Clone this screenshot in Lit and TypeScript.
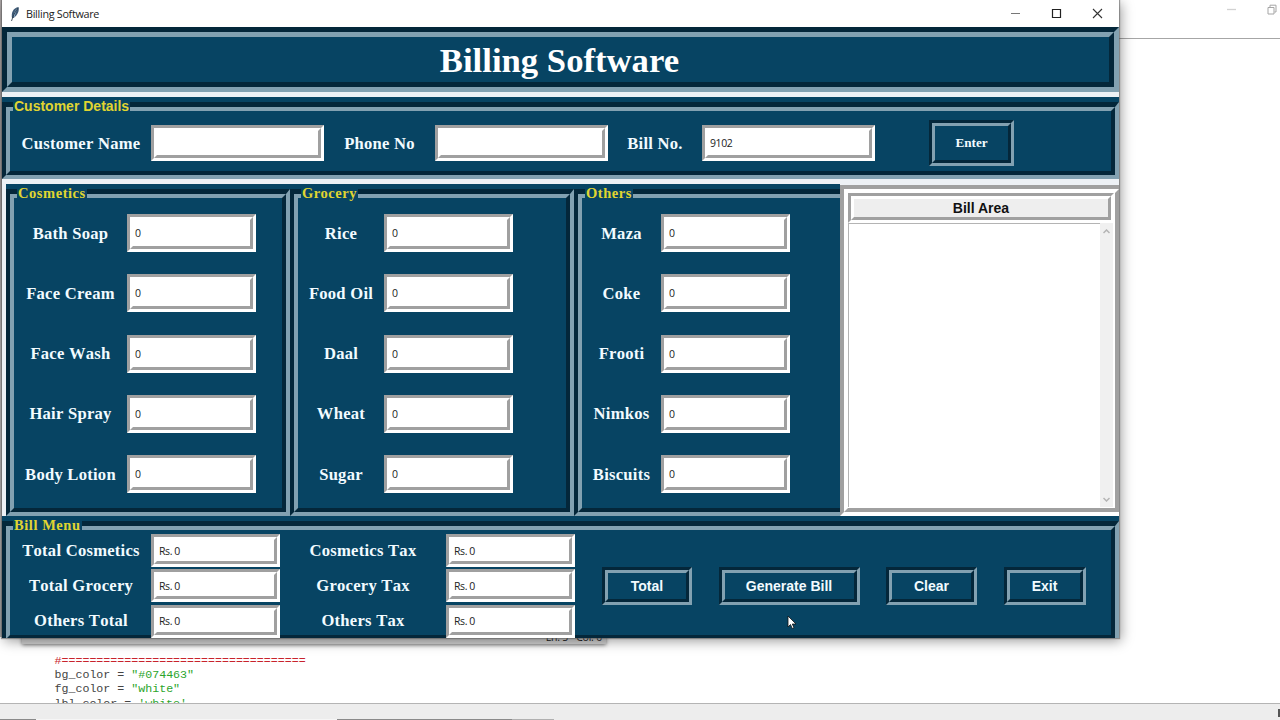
import { LitElement, html, css, svg } from "lit";
import { customElement, property } from "lit/decorators.js";

const bevel = css`
  *, *::before { box-sizing: border-box; }
  .groove {
    position: relative;
    border: var(--b, 4px) solid;
    border-color: var(--dk) var(--lt) var(--lt) var(--dk);
  }
  .groove::before {
    content: "";
    position: absolute;
    inset: 0;
    border: var(--b, 4px) solid;
    border-color: var(--lt) var(--dk) var(--dk) var(--lt);
    pointer-events: none;
  }
`;

/** Single-line entry with a grooved edge. */
@customElement("tk-entry")
export class TkEntry extends LitElement {
  @property() value = "";
  static styles = [bevel, css`
    :host { display: block; --dk: #a0a0a0; --lt: #fff; --b: 3px; }
    .groove {
      height: 100%;
      background: #fff;
      display: flex;
      align-items: center;
      padding-left: 5px;
      color: #222;
      font: 10.5px "Open Sans", "Noto Sans", sans-serif;
      letter-spacing: -0.4px;
      white-space: pre;
    }
  `];
  render() {
    return html`<div class="groove">${this.value}</div>`;
  }
}

/** Push button with a grooved edge. */
@customElement("tk-button")
export class TkButton extends LitElement {
  @property() label = "";
  static styles = [bevel, css`
    :host { display: block; --dk: #04273a; --lt: #82a1b1; --b: 3px; }
    .groove {
      height: 100%;
      background: #074463;
      display: flex;
      align-items: center;
      justify-content: center;
      color: #f2fbff;
      white-space: nowrap;
    }
  `];
  render() {
    return html`<div class="groove">${this.label}</div>`;
  }
}

/** Labelled frame; the caption sits over the top edge. */
@customElement("tk-frame")
export class TkFrame extends LitElement {
  @property() caption = "";
  static styles = [bevel, css`
    :host {
      display: block;
      --dk: #04273a;
      --lt: #82a1b1;
      --b: 4px;
      background: #074463;
      padding-top: 5px;
    }
    .groove { height: 100%; border-top-width: 5px; }
    .caption {
      position: absolute;
      left: 7px;
      top: -9px;
      height: 16px;
      line-height: 16px;
      padding: 0 1px;
      background: linear-gradient(transparent 3px, #074463 3px);
      color: #e0d531;
      font: var(--caption-font, bold 14.5px/17px "Liberation Serif", serif);
      letter-spacing: var(--caption-gap, 0.55px);
      white-space: nowrap;
    }
  `];
  render() {
    return html`<div class="groove">
      <span class="caption">${this.caption}</span>
      <slot></slot>
    </div>`;
  }
}

@customElement("app-root")
export class AppRoot extends LitElement {
  private goods = [
    { kind: "cosmetics", title: "Cosmetics", items: ["Bath Soap", "Face Cream", "Face Wash", "Hair Spray", "Body Lotion"] },
    { kind: "grocery", title: "Grocery", items: ["Rice", "Food Oil", "Daal", "Wheat", "Sugar"] },
    { kind: "others", title: "Others", items: ["Maza", "Coke", "Frooti", "Nimkos", "Biscuits"] },
  ];
  private totals = [
    ["Total Cosmetics", "Cosmetics Tax"],
    ["Total Grocery", "Grocery Tax"],
    ["Others Total", "Others Tax"],
  ];

  static styles = [bevel, css`
    :host {
      display: block;
      position: relative;
      width: 1280px;
      height: 720px;
      overflow: hidden;
      background: #fff;
      --dk: #04273a;
      --lt: #82a1b1;
    }
    svg { display: block; }

    .editor {
      position: absolute;
      inset: 0;
      display: grid;
      grid-template-rows: 38px 1fr 17px;
    }
    .editor-bar {
      border-bottom: 1px solid #a6a6a6;
      height: 39px;
      display: flex;
      justify-content: flex-end;
      padding: 4px 3px 0 0;
      gap: 30px;
    }
    .code {
      padding: 616px 0 0 54.5px;
      overflow: hidden;
      color: #444;
      font: 11.63px/14.2px "Liberation Mono", monospace;
      white-space: pre;
      min-height: 0;
    }
    .code .red { color: #c8232c; }
    .code .green { color: #2ba52b; }
    .taskbar {
      background: #ededed;
      border-top: 1px solid #b4b4b4;
      display: flex;
      align-items: flex-end;
    }
    .taskbar i { height: 1px; background: #8a8a8a; }
    .taskbar i:nth-child(1) { width: 36px; }
    .taskbar i:nth-child(2) { width: 301px; background: #f6f6f6; }
    .taskbar i:nth-child(3) { width: 175px; }
    .taskbar i:nth-child(4) { width: 42px; background: #b0b0b0; }
    .taskbar i:nth-child(5) { width: 2px; height: 8px; margin: 0 0 3px auto; background: #555; }

    .shell {
      position: absolute;
      left: 22px;
      top: 600px;
      width: 584px;
      height: 44px;
      background: #d2d2d2;
      box-shadow: 0 1px 4px rgba(0, 0, 0, 0.55);
      display: flex;
      align-items: flex-end;
      justify-content: flex-end;
      padding: 0 4px 1px 0;
      gap: 8px;
      color: #222;
      font: 10.5px/12px "Open Sans", sans-serif;
      letter-spacing: -0.2px;
    }
    .edge {
      position: absolute;
      left: 0;
      top: 0;
      width: 2px;
      height: 637px;
      background: linear-gradient(#b4aeae, #9d9797 20%, #c0bcbc 60%, #a5a5a5);
    }

    .window {
      position: absolute;
      left: 2px;
      top: 0;
      width: 1117px;
      height: 638px;
      background: #edf1f5;
      box-shadow: 0 0 1px 1px rgba(90, 90, 90, 0.55), 2px 3px 12px rgba(0, 0, 0, 0.4);
      display: grid;
      grid-template-rows: 27px 611px;
    }
    .window-body {
      display: grid;
      grid-template-rows: 70px 87px 332px 127px;
      height: 611px;
      overflow: hidden;
    }
    .banner, .customer { margin-bottom: 5px; }
    .titlebar {
      background: #fff;
      display: flex;
      align-items: center;
      color: #222;
      font: 10.8px/27px "Open Sans", "Noto Sans", sans-serif;
      letter-spacing: -0.3px;
    }
    .feather { margin: 0 5px 0 7px; }
    .controls { margin-left: auto; margin-right: 16px; display: flex; gap: 30px; }

    .banner {
      --b: 5px;
      background: #074463;
      display: flex;
      align-items: center;
      justify-content: center;
      color: #fff;
      font: bold 34.7px/40px "Liberation Serif", serif;
      padding: 2px 2px 0 0;
    }

    .label {
      color: #f2fbff;
      font: bold 16.6px/20px "Liberation Serif", serif;
      font-kerning: none;
      letter-spacing: 0.25px;
      text-align: center;
      white-space: nowrap;
    }

    .customer {
      --caption-font: bold 14px/16px "Liberation Sans", sans-serif;
      --caption-gap: 0;
    }
    .customer-row {
      height: 72px;
      padding-left: 5px;
      display: grid;
      grid-template-columns: 140px 173px 111px 173px 94px 173px 54px 85px;
      align-items: center;
    }
    .customer-row .label { padding-top: 1px; }
    .customer-row tk-entry { height: 36px; }
    .customer-row tk-button {
      grid-column: 8;
      height: 46px;
      font: bold 13.2px "Liberation Serif", serif;
    }

    .goods {
      padding-left: 4px;
      display: grid;
      grid-template-columns: 284px 284px 266px 279px;
      min-height: 0;
    }
    .clip { overflow: hidden; background: #074463; }
    .clip tk-frame { height: 332px; width: 284px; }
    .item-list {
      display: grid;
      grid-auto-rows: 38px;
      row-gap: 22.25px;
      padding-top: 20px;
      align-items: center;
    }
    .item-list tk-entry { height: 38px; }
    .item-list .label { padding-top: 1px; }
    .cosmetics .item-list { grid-template-columns: 117px 129px; }
    .cosmetics .label, .grocery .label { padding-left: 4px; }
    .grocery .item-list { grid-template-columns: 90px 129px; }
    .others .item-list { grid-template-columns: 83px 129px; }
    .others .label { padding-left: 4px; }

    .bill {
      --dk: #a0a0a0;
      --lt: #fff;
      --b: 4px;
      width: 283px;
      height: 331px;
      background: #fff;
      margin-top: 1px;
    }
    .bill-title {
      --b: 3px;
      margin: 4px 0 0 4px;
      width: 266px;
      height: 30px;
      background: #eee;
      display: flex;
      align-items: center;
      justify-content: center;
      color: #111;
      font: bold 14px "Liberation Sans", sans-serif;
    }
    .bill-body {
      margin: 0 0 0 4px;
      width: 265px;
      height: 284px;
      display: grid;
      grid-template-columns: 252px 13px;
    }
    .bill-text { border: 1px solid #b4b4b4; border-width: 1px 0 0 1px; }
    .scroll {
      background: #f0f0f0;
      display: flex;
      flex-direction: column;
      justify-content: space-between;
      padding: 6px 3px 5px;
    }

    .menu-row {
      position: relative;
      height: 113px;
      padding: 8px 0 0 5px;
      display: grid;
      grid-template-columns: 140px 129px 166px 129px 1fr;
    }
    .menu-grid {
      grid-column: 1 / 5;
      display: grid;
      grid-template-columns: subgrid;
      grid-auto-rows: 33px;
      row-gap: 2.4px;
      align-items: center;
    }
    .menu-grid tk-entry { height: 33px; }
    .actions {
      display: grid;
      grid-template-columns: 90px 141px 91px 82px;
      column-gap: 26.5px;
      padding: 33px 0 0 27px;
      font: bold 14px "Liberation Sans", sans-serif;
    }
    .actions tk-button { height: 38px; }
    .pointer { position: absolute; left: 787px; top: 615px; }
  `];

  private chevron(d: string) {
    return html`<svg width="7" height="5" viewBox="0 0 7 5">${svg`<path d=${d} fill="none" stroke="#b4b4b4" stroke-width="1.5"/>`}</svg>`;
  }

  render() {
    return html`
      <div class="editor">
        <div class="editor-bar">
          <svg width="10" height="12" viewBox="0 0 10 12"><path d="M0 5.5H9" stroke="#d2d2d2" stroke-width="1.3"/></svg>
          <svg width="10" height="12" viewBox="0 0 10 12"><path d="M1 3.5H7V10H1ZM3 3V1.2H9V8H7.5" fill="none" stroke="#a5a5a5"/></svg>
        </div>
        <div class="code"><span class="red">#${"=".repeat(35)}</span>
bg_color = <span class="green">"#074463"</span>
fg_color = <span class="green">"white"</span>
lbl_color = <span class="green">'white'</span></div>
        <div class="taskbar"><i></i><i></i><i></i><i></i><i></i></div>
      </div>
      <div class="shell"><span>Ln: 5</span><span>Col: 0</span></div>
      <div class="edge"></div>

      <div class="window">
        <div class="titlebar">
          <svg class="feather" width="12" height="16" viewBox="0 0 12 16">
            <path d="M3 12C2 7 4 2 9.500 1C10.500 4 9 9 4.500 12Z" fill="#3d5875"/>
            <path d="M4.500 11C4.500 7 6 4 9 1.500C7 5 6.500 8 5.500 11Z" fill="#8fb1cf"/>
            <path d="M2.500 15C4 10 6 6 9 2" fill="none" stroke="#20303f" stroke-width=".8"/>
          </svg>
          <span>Billing Software</span>
          <div class="controls">
            <svg width="11" height="11" viewBox="0 0 11 11"><path d="M1 5.500H10" stroke="#777"/></svg>
            <svg width="11" height="11" viewBox="0 0 11 11"><path d="M1.500 1.500H9.500V9.500H1.500Z" fill="none" stroke="#222" stroke-width="1.200"/></svg>
            <svg width="11" height="11" viewBox="0 0 11 11"><path d="M1 1L10 10M10 1L1 10" stroke="#333" stroke-width="1.100"/></svg>
          </div>
        </div>
        <div class="window-body">
          <div class="banner groove">Billing Software</div>

          <tk-frame class="customer" caption="Customer Details">
            <div class="customer-row">
              <span class="label">Customer Name</span><tk-entry></tk-entry>
              <span class="label">Phone No</span><tk-entry></tk-entry>
              <span class="label">Bill No.</span><tk-entry value="9102"></tk-entry>
              <tk-button label="Enter"></tk-button>
            </div>
          </tk-frame>

          <div class="goods">
            ${this.goods.map((g) => html`
              <div class="clip ${g.kind}">
                <tk-frame caption=${g.title}>
                  <div class="item-list">
                    ${g.items.map((n) => html`<span class="label">${n}</span><tk-entry value="0"></tk-entry>`)}
                  </div>
                </tk-frame>
              </div>`)}
            <div class="bill groove">
              <div class="bill-title groove">Bill Area</div>
              <div class="bill-body">
                <div class="bill-text"></div>
                <div class="scroll">
                  ${this.chevron("M.5 4L3.500 1L6.500 4")}
                  ${this.chevron("M.5 1L3.500 4L6.500 1")}
                </div>
              </div>
            </div>
          </div>

          <tk-frame class="menu" caption="Bill Menu">
            <div class="menu-row">
              <div class="menu-grid">
                ${this.totals.map(([a, b]) => html`
                  <span class="label">${a}</span><tk-entry value="Rs. 0"></tk-entry>
                  <span class="label">${b}</span><tk-entry value="Rs. 0"></tk-entry>`)}
              </div>
              <div class="actions">
                ${["Total", "Generate Bill", "Clear", "Exit"].map((l) => html`<tk-button label=${l}></tk-button>`)}
              </div>
            </div>
          </tk-frame>
        </div>
      </div>
      <svg class="pointer" width="10" height="15" viewBox="0 0 10 15">
        <path d="M1 1V12L3.500 9.500L5.200 13.500L7 12.700L5.300 9H9Z" fill="#fff" stroke="#111" stroke-width=".8"/>
      </svg>
    `;
  }
}
